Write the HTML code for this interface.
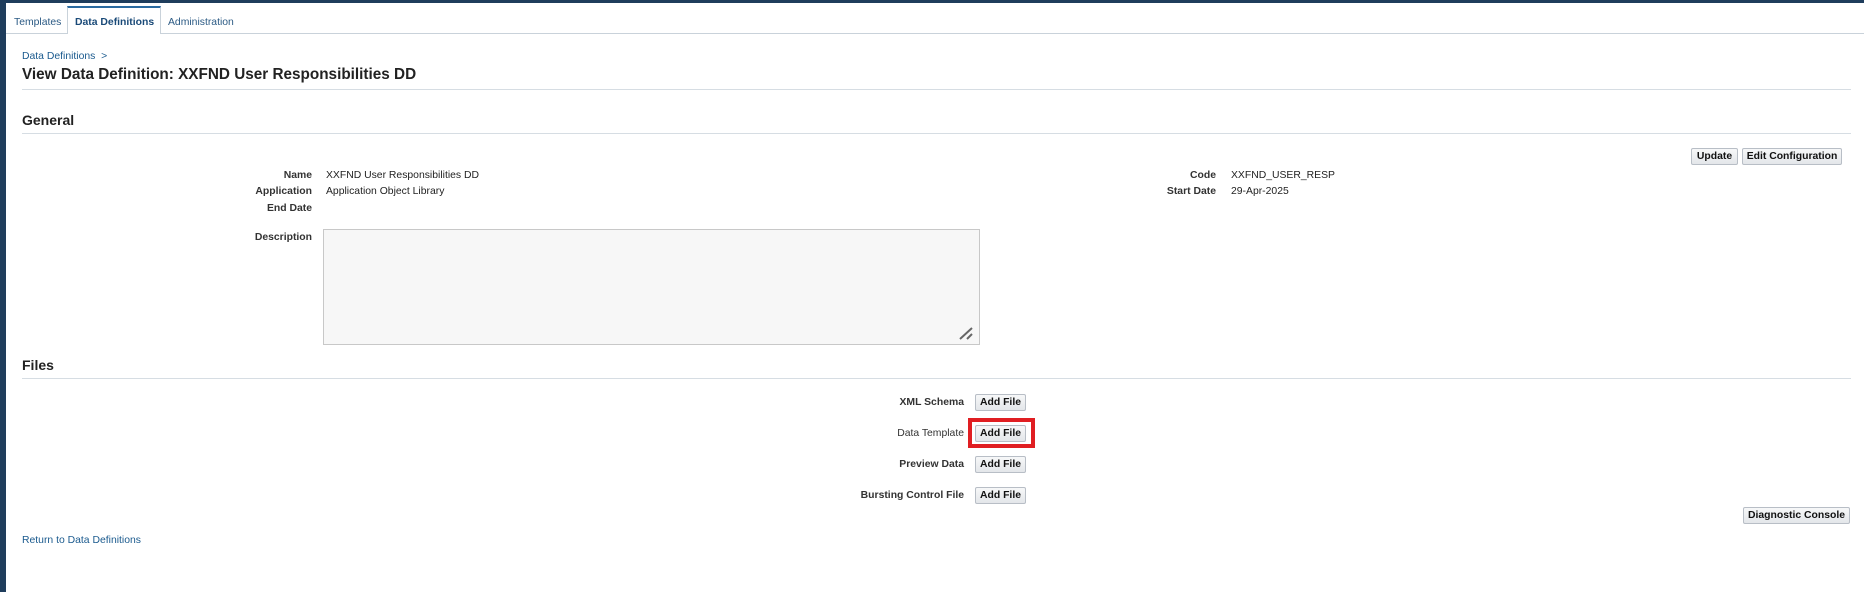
<!DOCTYPE html>
<html><head><meta charset="utf-8"><style>
*{margin:0;padding:0;box-sizing:border-box}
body{width:1864px;height:592px;overflow:hidden;background:#fff;font-family:"Liberation Sans",Arial,sans-serif;font-size:10.4px;color:#222;position:relative}
.a{position:absolute;white-space:nowrap}
.lb{position:absolute;text-align:right;white-space:nowrap;color:#333;font-weight:bold}
.btn{position:absolute;height:17px;border:1px solid #b8bec6;border-radius:2px;background:linear-gradient(#f7f8f9,#e3e6ea);font-weight:bold;font-size:10.4px;color:#111;text-align:center;line-height:15px}
.line{position:absolute;height:1px;background:#d6dde3}
a{color:#1a5a8e;text-decoration:none}
</style></head><body>
<div class="a" style="left:0;top:0;width:1864px;height:3px;background:#1f3d5c"></div>
<div class="a" style="left:0;top:0;width:6px;height:592px;background:#1f3d5c"></div>
<!-- tabs -->
<div class="line" style="left:6px;top:33px;width:1858px;background:#c9d2da"></div>
<div class="a" style="left:14px;top:17px;color:#2b5a84">Templates</div>
<div class="a" style="left:67px;top:6px;width:94px;height:28px;background:#fff;border:1px solid #c9d2da;border-bottom:none;border-top:2px solid #2a6aa0"></div>
<div class="a" style="left:75px;top:17px;color:#1a4a78;font-weight:bold">Data Definitions</div>
<div class="a" style="left:168px;top:17px;color:#2b5a84">Administration</div>
<!-- header -->
<div class="a" style="left:22px;top:51px;color:#1a5a8e">Data Definitions &nbsp;&gt;</div>
<div class="a" style="left:22px;top:66px;font-size:15.3px;font-weight:bold;color:#222">View Data Definition: XXFND User Responsibilities DD</div>
<div class="line" style="left:22px;top:89px;width:1829px"></div>
<div class="a" style="left:22px;top:112px;font-size:14px;font-weight:bold;color:#222">General</div>
<div class="line" style="left:22px;top:133px;width:1829px"></div>
<div class="btn" style="left:1691px;top:148px;width:47px">Update</div>
<div class="btn" style="left:1742px;top:148px;width:100px">Edit Configuration</div>
<div class="lb" style="right:1552px;top:170px">Name</div>
<div class="a" style="left:326px;top:170px">XXFND User Responsibilities DD</div>
<div class="lb" style="right:1552px;top:186px">Application</div>
<div class="a" style="left:326px;top:186px">Application Object Library</div>
<div class="lb" style="right:1552px;top:203px">End Date</div>
<div class="lb" style="right:1552px;top:232px">Description</div>
<div class="a" style="left:323px;top:229px;width:657px;height:116px;background:#f7f7f7;border:1px solid #c8c8c8"></div>
<svg class="a" style="left:958px;top:326px" width="20" height="16"><path d="M2 13 L14 2 M9 13 L14 8" stroke="#666" stroke-width="2"/></svg>
<div class="lb" style="right:648px;top:170px">Code</div>
<div class="a" style="left:1231px;top:170px">XXFND_USER_RESP</div>
<div class="lb" style="right:648px;top:186px">Start Date</div>
<div class="a" style="left:1231px;top:186px">29-Apr-2025</div>
<!-- files -->
<div class="a" style="left:22px;top:357px;font-size:14px;font-weight:bold;color:#222">Files</div>
<div class="line" style="left:22px;top:378px;width:1829px"></div>
<div class="lb" style="right:900px;top:397px">XML Schema</div>
<div class="btn" style="left:975px;top:394px;width:51px">Add File</div>
<div class="a" style="left:968px;top:418px;width:67px;height:30px;border:4px solid #e01e22"></div>
<div class="lb" style="right:900px;top:428px;font-weight:normal">Data Template</div>
<div class="btn" style="left:975px;top:425px;width:51px">Add File</div>
<div class="lb" style="right:900px;top:459px">Preview Data</div>
<div class="btn" style="left:975px;top:456px;width:51px">Add File</div>
<div class="lb" style="right:900px;top:490px">Bursting Control File</div>
<div class="btn" style="left:975px;top:487px;width:51px">Add File</div>
<div class="btn" style="left:1743px;top:507px;width:107px">Diagnostic Console</div>
<div class="a" style="left:22px;top:535px"><a>Return to Data Definitions</a></div>
</body></html>
